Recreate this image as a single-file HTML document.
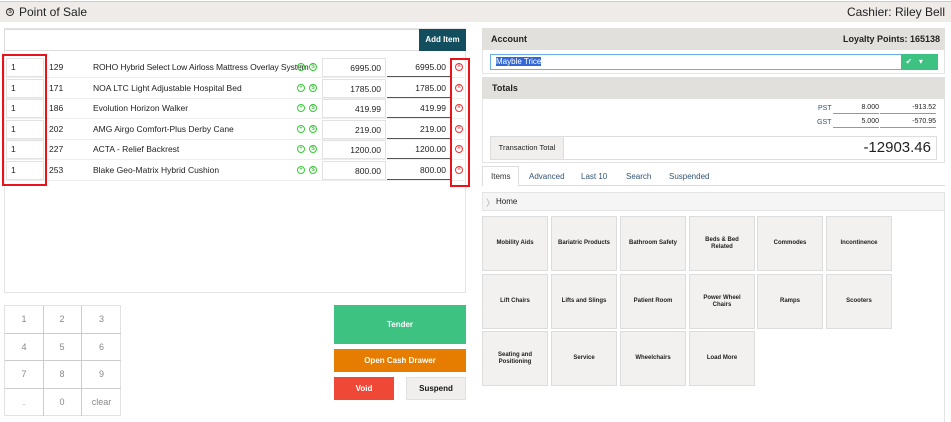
<!DOCTYPE html><html><head><style>
*{box-sizing:border-box;margin:0;padding:0}
body{width:951px;height:422px;position:relative;background:#fff;font-family:"Liberation Sans",sans-serif;overflow:hidden;color:#222}
.a{position:absolute}
.hdr{left:0;top:1px;width:951px;height:21px;background:#efebe8;border-top:1px solid #ccc}
.inp{position:absolute;border:1px solid #e2e2e2;background:#fff;font-size:8.5px;padding-left:4px;line-height:17px}
.row{position:absolute;left:4px;width:462px;height:21px;border-bottom:1px solid #eee;font-size:8.5px}
.row span{position:absolute;top:5px}
.ic{position:absolute;top:6px;width:8px;height:8px;border-radius:50%;border:1px solid #3c3;font-size:6px;line-height:6px;text-align:center;color:#3a3}
.x{position:absolute;left:451px;top:6px;width:8px;height:8px;border-radius:50%;border:1px solid #e33;color:#e33;font-size:7px;line-height:6px;text-align:center}
.pr{position:absolute;top:1px;height:19px;font-size:8.5px;text-align:right;padding-right:4px;line-height:18px}
.kp{left:4px;top:305px;width:117px;height:111px;border:1px solid #e2e2e2}
.k{position:absolute;width:39px;height:27.5px;border-right:1px solid #ccc;border-bottom:1px solid #ccc;font-size:9px;color:#888;text-align:center;line-height:27px}
.btn{position:absolute;color:#fff;font-size:8px;font-weight:bold;text-align:center}
.tile{position:absolute;width:66px;height:55px;background:#f2f1ef;border:1px solid #ddd;font-size:6px;font-weight:bold;display:flex;align-items:center;justify-content:center;text-align:center;line-height:7px}
.tab{position:absolute;top:172px;font-size:8px;color:#357}
</style></head><body>
<div class="a hdr"></div>
<div class="a" style="left:6px;top:8px;width:8px;height:8px;border:1px solid #333;border-radius:50%;font-size:6px;line-height:6px;text-align:center">$</div>
<div class="a" style="left:19px;top:5px;font-size:12px">Point of Sale</div>
<div class="a" style="right:6px;top:5px;font-size:12px">Cashier: Riley Bell</div>

<div class="a" style="left:4px;top:28px;width:462px;height:265px;border:1px solid #e4e4e4"></div>
<div class="a" style="left:4px;top:29px;width:416px;height:22px;border:1px solid #ddd"></div>
<div class="a" style="left:419px;top:29px;width:47px;height:22px;background:#134e5e;color:#fff;font-size:8px;font-weight:bold;text-align:center;line-height:22px">Add Item</div>

<div class="row" style="top:57px"><div class="inp" style="left:2px;top:1px;width:38px;height:19px">1</div><span style="left:45px">129</span><span style="left:89px;letter-spacing:-0.1px">ROHO Hybrid Select Low Airloss Mattress Overlay System</span><div class="ic" style="left:293px">+</div><div class="ic" style="left:305px">$</div><div class="pr inp" style="left:318px;width:64px">6995.00</div><div class="pr" style="left:383px;width:63px;border-bottom:1px solid #555">6995.00</div><div class="x">×</div></div>
<div class="row" style="top:78px"><div class="inp" style="left:2px;top:1px;width:38px;height:19px">1</div><span style="left:45px">171</span><span style="left:89px">NOA LTC Light Adjustable Hospital Bed</span><div class="ic" style="left:293px">+</div><div class="ic" style="left:305px">$</div><div class="pr inp" style="left:318px;width:64px">1785.00</div><div class="pr" style="left:383px;width:63px;border-bottom:1px solid #555">1785.00</div><div class="x">×</div></div>
<div class="row" style="top:98px"><div class="inp" style="left:2px;top:1px;width:38px;height:19px">1</div><span style="left:45px">186</span><span style="left:89px">Evolution Horizon Walker</span><div class="ic" style="left:293px">+</div><div class="ic" style="left:305px">$</div><div class="pr inp" style="left:318px;width:64px">419.99</div><div class="pr" style="left:383px;width:63px;border-bottom:1px solid #555">419.99</div><div class="x">×</div></div>
<div class="row" style="top:119px"><div class="inp" style="left:2px;top:1px;width:38px;height:19px">1</div><span style="left:45px">202</span><span style="left:89px">AMG Airgo Comfort-Plus Derby Cane</span><div class="ic" style="left:293px">+</div><div class="ic" style="left:305px">$</div><div class="pr inp" style="left:318px;width:64px">219.00</div><div class="pr" style="left:383px;width:63px;border-bottom:1px solid #555">219.00</div><div class="x">×</div></div>
<div class="row" style="top:139px"><div class="inp" style="left:2px;top:1px;width:38px;height:19px">1</div><span style="left:45px">227</span><span style="left:89px">ACTA - Relief Backrest</span><div class="ic" style="left:293px">+</div><div class="ic" style="left:305px">$</div><div class="pr inp" style="left:318px;width:64px">1200.00</div><div class="pr" style="left:383px;width:63px;border-bottom:1px solid #555">1200.00</div><div class="x">×</div></div>
<div class="row" style="top:160px"><div class="inp" style="left:2px;top:1px;width:38px;height:19px">1</div><span style="left:45px">253</span><span style="left:89px">Blake Geo-Matrix Hybrid Cushion</span><div class="ic" style="left:293px">+</div><div class="ic" style="left:305px">$</div><div class="pr inp" style="left:318px;width:64px">800.00</div><div class="pr" style="left:383px;width:63px;border-bottom:1px solid #555">800.00</div><div class="x">×</div></div>

<div class="a" style="left:2px;top:54px;width:45px;height:132px;border:2px solid #e8141c"></div>
<div class="a" style="left:450px;top:58px;width:20px;height:129px;border:2px solid #e8141c"></div>

<div class="a kp">
<div class="k" style="left:0;top:0">1</div><div class="k" style="left:38px;top:0">2</div><div class="k" style="left:77px;top:0;border-right:none">3</div>
<div class="k" style="left:0;top:27.5px">4</div><div class="k" style="left:38px;top:27.5px">5</div><div class="k" style="left:77px;top:27.5px;border-right:none">6</div>
<div class="k" style="left:0;top:55px">7</div><div class="k" style="left:38px;top:55px">8</div><div class="k" style="left:77px;top:55px;border-right:none">9</div>
<div class="k" style="left:0;top:82.5px;border-bottom:none">.</div><div class="k" style="left:38px;top:82.5px;border-bottom:none">0</div><div class="k" style="left:77px;top:82.5px;border:none">clear</div>
</div>
<div class="btn" style="left:334px;top:305px;width:132px;height:39px;background:#3dc281;line-height:39px">Tender</div>
<div class="btn" style="left:334px;top:349px;width:132px;height:23px;background:#e67c00;line-height:23px">Open Cash Drawer</div>
<div class="btn" style="left:334px;top:377px;width:60px;height:23px;background:#ef4836;line-height:23px">Void</div>
<div class="btn" style="left:406px;top:377px;width:60px;height:23px;background:#f0efed;color:#111;border:1px solid #e0e0e0;line-height:21px">Suspend</div>

<div class="a" style="left:482px;top:28px;width:463px;height:46px;border:1px solid #e4e4e4"></div>
<div class="a" style="left:482px;top:28px;width:463px;height:22px;background:#e1e0dc"></div>
<div class="a" style="left:491px;top:34px;font-size:9px;font-weight:bold">Account</div>
<div class="a" style="right:11px;top:34px;font-size:9px;font-weight:bold">Loyalty Points: 165138</div>
<div class="a" style="left:490px;top:54px;width:412px;height:16px;border:1px solid #6ab0e8;font-size:8px;padding:2px 0 0 5px"><span style="background:#3367d6;color:#fff">Mayble Trice</span></div>
<div class="a" style="left:901px;top:54px;width:37px;height:16px;background:#3dc281;color:#fff;font-size:8px;line-height:16px">&nbsp;&nbsp;✔&nbsp;&nbsp;&nbsp;▾</div>

<div class="a" style="left:482px;top:77px;width:463px;height:86px;border:1px solid #e4e4e4"></div>
<div class="a" style="left:482px;top:77px;width:463px;height:22px;background:#e1e0dc"></div>
<div class="a" style="left:492px;top:83px;font-size:9px;font-weight:bold">Totals</div>
<div class="a" style="left:818px;top:105px;font-size:7px;color:#357">PST</div>
<div class="a" style="left:833px;top:104px;width:46px;height:10px;border-bottom:1px solid #999;font-size:7px;text-align:right">8.000</div>
<div class="a" style="left:880px;top:104px;width:56px;height:10px;border-bottom:1px solid #999;font-size:7px;text-align:right">-913.52</div>
<div class="a" style="left:817px;top:119px;font-size:7px;color:#357">GST</div>
<div class="a" style="left:833px;top:118px;width:46px;height:10px;border-bottom:1px solid #999;font-size:7px;text-align:right">5.000</div>
<div class="a" style="left:880px;top:118px;width:56px;height:10px;border-bottom:1px solid #999;font-size:7px;text-align:right">-570.95</div>
<div class="a" style="left:490px;top:136px;width:447px;height:24px;border:1px solid #ddd"></div>
<div class="a" style="left:490px;top:136px;width:74px;height:24px;background:#f0efed;border:1px solid #ddd;font-size:7.5px;line-height:22px;text-align:center">Transaction Total</div>
<div class="a" style="right:20px;top:139px;font-size:15px">-12903.46</div>

<div class="a" style="left:482px;top:185px;width:463px;border-top:1px solid #ddd"></div>
<div class="a" style="left:482px;top:166px;width:37px;height:20px;background:#fff;border:1px solid #ddd;border-bottom:none"></div>
<div class="tab" style="left:491px;color:#333">Items</div>
<div class="tab" style="left:529px">Advanced</div>
<div class="tab" style="left:581px">Last 10</div>
<div class="tab" style="left:626px">Search</div>
<div class="tab" style="left:669px">Suspended</div>
<div class="a" style="left:482px;top:192px;width:463px;height:19px;background:#f5f5f5;border:1px solid #e4e4e4"></div>
<div class="a" style="left:486px;top:196px;font-size:9px;color:#aaa">〉</div>
<div class="a" style="left:496px;top:197px;font-size:8px">Home</div>

<div class="tile" style="left:482px;top:216px">Mobility Aids</div>
<div class="tile" style="left:551px;top:216px">Bariatric Products</div>
<div class="tile" style="left:620px;top:216px">Bathroom Safety</div>
<div class="tile" style="left:689px;top:216px">Beds &amp; Bed<br>Related</div>
<div class="tile" style="left:757px;top:216px">Commodes</div>
<div class="tile" style="left:826px;top:216px">Incontinence</div>
<div class="tile" style="left:482px;top:274px">Lift Chairs</div>
<div class="tile" style="left:551px;top:274px">Lifts and Slings</div>
<div class="tile" style="left:620px;top:274px">Patient Room</div>
<div class="tile" style="left:689px;top:274px">Power Wheel<br>Chairs</div>
<div class="tile" style="left:757px;top:274px">Ramps</div>
<div class="tile" style="left:826px;top:274px">Scooters</div>
<div class="tile" style="left:482px;top:331px">Seating and<br>Positioning</div>
<div class="tile" style="left:551px;top:331px">Service</div>
<div class="tile" style="left:620px;top:331px">Wheelchairs</div>
<div class="tile" style="left:689px;top:331px">Load More</div>
<div class="a" style="left:944px;top:192px;height:230px;border-left:1px solid #e4e4e4"></div>
</body></html>
